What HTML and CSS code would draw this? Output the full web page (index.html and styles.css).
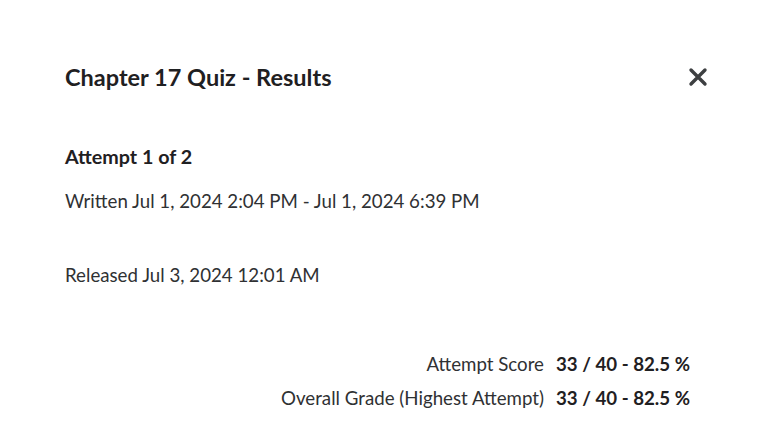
FILE: index.html
```html
<!DOCTYPE html>
<html lang="en">
<head>
    <meta charset="UTF-8">
    <title>Chapter 17 Quiz - Results</title>
    <link rel="stylesheet" href="styles.css">
</head>
<body>
    <div id="dialog">
        <div class="header">
            <h1 class="title">Chapter 17 Quiz - Results</h1>
            <span class="close" title="Close">
                <svg width="20" height="20" viewBox="0 0 20 20">
                    <path d="M3 3 L17 17 M17 3 L3 17" stroke="#3d3f41" stroke-width="3.4" stroke-linecap="round"/>
                </svg>
            </span>
        </div>
        <div class="attempt">
            <h2>Attempt 1 of 2</h2>
            <p class="written">Written Jul 1, 2024 2:04 PM - Jul 1, 2024 6:39 PM</p>
            <p class="released">Released Jul 3, 2024 12:01 AM</p>
        </div>
        <table class="scores">
            <tr>
                <td class="label">Attempt Score</td>
                <td class="value">33 / 40 - 82.5 %</td>
            </tr>
            <tr>
                <td class="label">Overall Grade (Highest Attempt)</td>
                <td class="value">33 / 40 - 82.5 %</td>
            </tr>
        </table>
    </div>
</body>
</html>
```

FILE: styles.css
```css
*{
    padding: 0;
    margin: 0;
}
body{
    background: #ffffff;
    font-family: Lato, "Noto Sans", sans-serif;
    color: #2f3133;
}
#dialog{
    width: 784px;
    height: 441px;
    padding: 61px 76px 0 65px;
    box-sizing: border-box;
}
.header{
    display: flex;
    justify-content: space-between;
    align-items: center;
}
.title{
    font-size: 23.5px;
    font-weight: 700;
    color: #1f2022;
    line-height: 32px;
}
.close{
    display: flex;
    width: 20px;
    height: 20px;
}
.attempt{
    margin-top: 51px;
}
.attempt h2{
    font-size: 19.7px;
    font-weight: 700;
    color: #1f2022;
    line-height: 26px;
}
.written,
.released{
    font-size: 18.7px;
    line-height: 26px;
}
.written{
    margin-top: 18px;
}
.released{
    margin-top: 48px;
}
.scores{
    margin: 61px 0 0 auto;
    border-collapse: collapse;
    font-size: 18.7px;
}
.scores td{
    padding: 2px 0 6px;
    line-height: 26px;
}
.scores .label{
    text-align: right;
    padding-right: 12px;
}
.scores .value{
    font-weight: 700;
    color: #1f2022;
    padding-right: 18px;
}
```
